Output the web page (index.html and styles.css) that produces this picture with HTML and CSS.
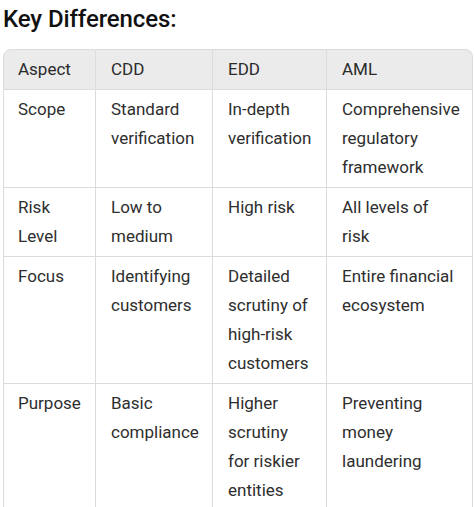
FILE: index.html
```html
<!DOCTYPE html>
<html>
<head>
<meta charset="utf-8">
<link rel="stylesheet" href="styles.css">
</head>
<body>
<h2 class="title">Key Differences:</h2>
<div class="table-wrap">
<table class="diff">
<colgroup><col class="c1"><col class="c2"><col class="c3"><col class="c4"></colgroup>
<thead>
<tr><th>Aspect</th><th>CDD</th><th>EDD</th><th>AML</th></tr>
</thead>
<tbody>
<tr><td>Scope</td><td>Standard verification</td><td>In-depth verification</td><td>Comprehensive regulatory framework</td></tr>
<tr><td>Risk Level</td><td>Low to medium</td><td>High risk</td><td>All levels of risk</td></tr>
<tr><td>Focus</td><td>Identifying customers</td><td>Detailed scrutiny of high-risk customers</td><td>Entire financial ecosystem</td></tr>
<tr><td>Purpose</td><td>Basic compliance</td><td>Higher scrutiny for riskier entities</td><td>Preventing money laundering</td></tr>
</tbody>
</table>
</div>
</body>
</html>
```

FILE: styles.css
```css
html, body {
  margin: 0;
  padding: 0;
  background: #ffffff;
}
body {
  font-family: Roboto, "Liberation Sans", sans-serif;
  color: #2e2e2e;
  overflow: hidden;
}
.title {
  margin: 0;
  padding: 5px 0 0 3px;
  font-size: 24px;
  line-height: 28px;
  font-weight: 500;
  color: #111111;
  letter-spacing: -0.1px;
}
.table-wrap {
  margin-top: 16px;
  padding-left: 3px;
}
.diff {
  table-layout: fixed;
  width: 470px;
  border-collapse: separate;
  border-spacing: 0;
  font-size: 17px;
  line-height: 29px;
  color: #2e2e2e;
}
.c1 { width: 93px; }
.c2 { width: 117px; }
.c3 { width: 114px; }
.c4 { width: 146px; }
.diff th, .diff td {
  text-align: left;
  vertical-align: top;
  padding: 5px 13.5px 5px 15px;
  border-right: 1px solid #dcdcdc;
  border-bottom: 1px solid #dcdcdc;
  font-weight: 400;
}
.diff th:first-child, .diff td:first-child {
  border-left: 1px solid #dcdcdc;
  padding-left: 14px;
}
.diff th:last-child, .diff td:last-child {
  padding-right: 12.2px;
}
.diff th {
  background: #ebebeb;
  border-top: 1px solid #dcdcdc;
  color: #2a2a2a;
}
.diff th:first-child { border-top-left-radius: 8px; }
.diff th:last-child { border-top-right-radius: 8px; }
```
